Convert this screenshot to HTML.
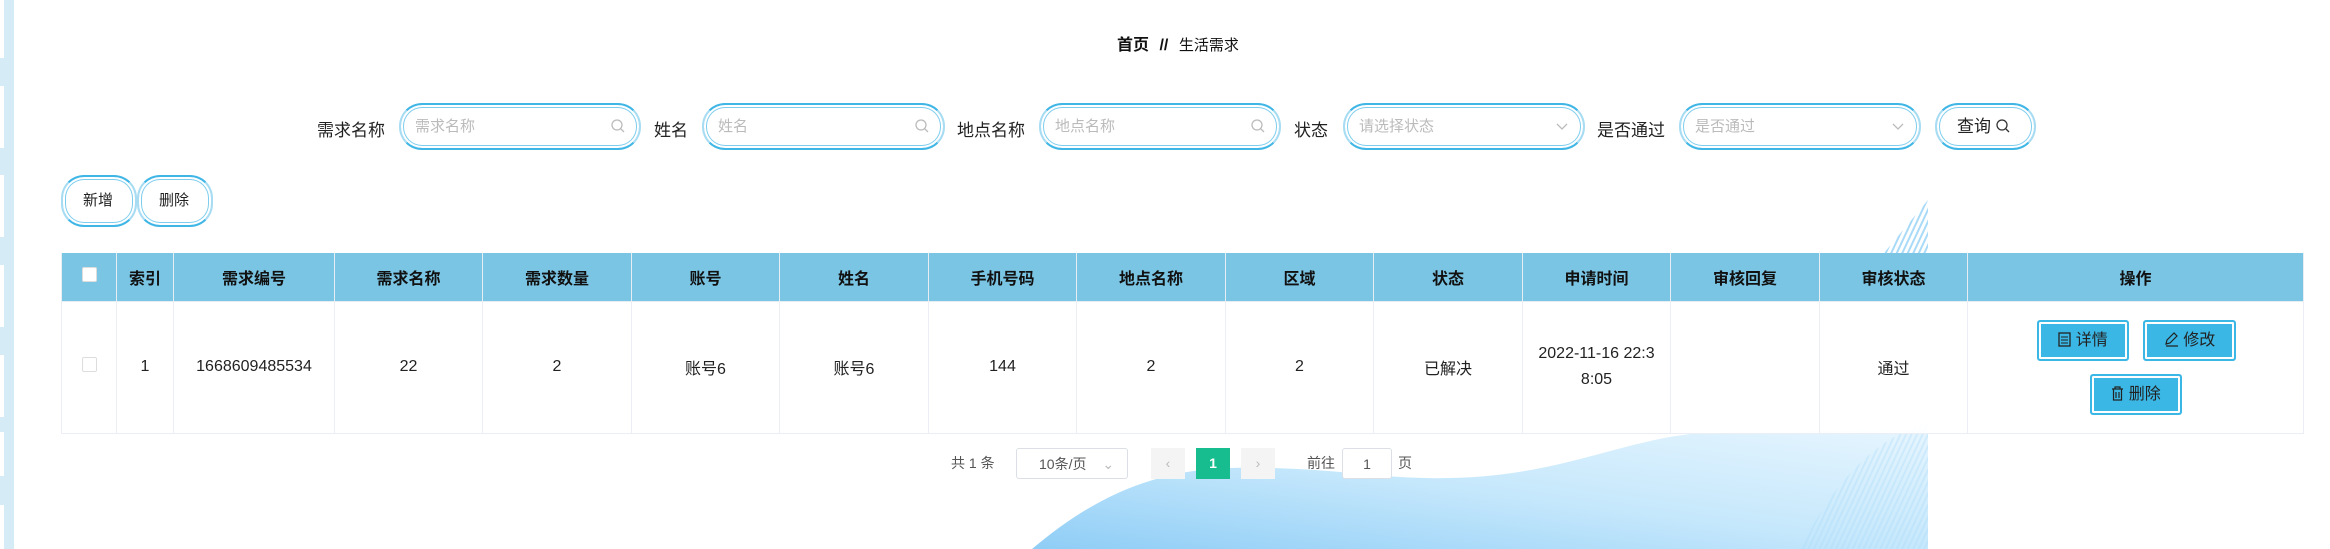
<!DOCTYPE html>
<html><head><meta charset="utf-8"><style>
*{box-sizing:border-box;margin:0;padding:0}
body{width:2330px;height:549px;overflow:hidden;background:#fff;position:relative;font-family:"Liberation Sans","Noto Sans CJK SC",sans-serif;color:#222}
.abs{position:absolute}
.strip{left:0;top:0;width:14px;height:549px;background:#d5ecf7}
.seg{position:absolute;left:0;width:4px;background:#fff}
.pill{position:absolute;height:47px;top:103px;border:2px solid #3fb6e6;border-left-color:#a8dcf3;border-right-color:#a8dcf3;border-radius:23px;box-shadow:inset 0 0 0 2px #fff,inset 0 0 0 3px #7fcdee;background:#fff;font-size:15px;color:#bbb;line-height:43px;padding-left:14px}
.lbl{position:absolute;top:116px;font-size:17px;color:#222}
.ico{position:absolute;right:14px;top:14px}
table{position:absolute;left:61px;top:253px;border-collapse:collapse;width:2243px;table-layout:fixed}
th{background:#7ac5e4;height:48px;font-size:16px;font-weight:bold;color:#111;border:1px solid #e6eef3;border-top:none}
td{height:132px;font-size:16px;text-align:center;border:1px solid #ebeef5;color:#222;background:rgba(255,255,255,0.9)}
.cb{display:inline-block;width:15px;height:15px;border:1px solid #ddd;border-radius:2px;background:#fff}
.ab{position:absolute;background:#3bb7e6;border:2px solid #3bb7e6;box-shadow:inset 0 0 0 2px #fff;border-radius:3px;font-size:16px;color:#222;text-align:center;line-height:37px;height:41px}
.pg{position:absolute;top:448px;height:31px;font-size:14px;color:#555;line-height:31px}
</style></head><body>
<svg class="abs" style="left:1030px;top:195px" width="900" height="354" viewBox="1030 195 900 354">
<defs><linearGradient id="g" x1="0" y1="1" x2="1" y2="0"><stop offset="0" stop-color="#8fcdf6"/><stop offset="0.5" stop-color="#c6e8fc"/><stop offset="1" stop-color="#e6f5fe"/></linearGradient>
<pattern id="h" width="5" height="5" patternUnits="userSpaceOnUse" patternTransform="rotate(25)"><rect width="2" height="5" fill="#a9daf8"/></pattern></defs>
<path d="M1032 549 C1090 500 1150 470 1230 468 C1330 466 1380 480 1450 478 C1560 476 1620 440 1700 433 L1928 430 L1928 549 Z" fill="url(#g)"/>
<path d="M1928 200 L1928 253 L1884 253 Z" fill="url(#h)"/>
<path d="M1800 549 C1840 470 1880 440 1928 420 L1928 549 Z" fill="url(#h)" opacity="0.35"/>
</svg>
<div class="abs strip"><div class="seg" style="top:0;height:58px"></div><div class="seg" style="top:86px;height:62px"></div><div class="seg" style="top:175px;height:62px"></div><div class="seg" style="top:265px;height:62px"></div><div class="seg" style="top:355px;height:62px"></div><div class="seg" style="top:432px;height:44px"></div><div class="seg" style="top:505px;height:44px"></div></div>
<div class="abs" style="left:1117px;top:31px;font-size:16px;color:#111"><b>首页</b> <b style="margin:0 6px">//</b> <span style="font-size:15px">生活需求</span></div>

<div class="lbl" style="left:317px">需求名称</div>
<div class="pill" style="left:399px;width:242px">需求名称<svg class="ico" width="14" height="14" viewBox="0 0 14 14"><circle cx="6" cy="6" r="5" fill="none" stroke="#bbb" stroke-width="1.3"/><path d="M10 10l3 3" stroke="#bbb" stroke-width="1.3"/></svg></div>
<div class="lbl" style="left:654px">姓名</div>
<div class="pill" style="left:702px;width:243px">姓名<svg class="ico" width="14" height="14" viewBox="0 0 14 14"><circle cx="6" cy="6" r="5" fill="none" stroke="#bbb" stroke-width="1.3"/><path d="M10 10l3 3" stroke="#bbb" stroke-width="1.3"/></svg></div>
<div class="lbl" style="left:957px">地点名称</div>
<div class="pill" style="left:1039px;width:242px">地点名称<svg class="ico" width="14" height="14" viewBox="0 0 14 14"><circle cx="6" cy="6" r="5" fill="none" stroke="#bbb" stroke-width="1.3"/><path d="M10 10l3 3" stroke="#bbb" stroke-width="1.3"/></svg></div>
<div class="lbl" style="left:1294px">状态</div>
<div class="pill" style="left:1343px;width:242px">请选择状态<svg class="ico" width="14" height="14" viewBox="0 0 14 14"><path d="M2 5l5 5 5-5" fill="none" stroke="#bbb" stroke-width="1.3"/></svg></div>
<div class="lbl" style="left:1597px">是否通过</div>
<div class="pill" style="left:1679px;width:242px">是否通过<svg class="ico" width="14" height="14" viewBox="0 0 14 14"><path d="M2 5l5 5 5-5" fill="none" stroke="#bbb" stroke-width="1.3"/></svg></div>
<div class="pill" style="left:1935px;width:101px;color:#222;font-size:17px;padding-left:20px">查询 <svg width="14" height="14" viewBox="0 0 14 14" style="vertical-align:-1px"><circle cx="6" cy="6" r="5" fill="none" stroke="#333" stroke-width="1.3"/><path d="M10 10l3 3" stroke="#333" stroke-width="1.3"/></svg></div>

<div class="pill" style="left:61px;top:175px;height:52px;width:76px;line-height:48px;color:#222;padding-left:20px;font-size:15px">新增</div>
<div class="pill" style="left:137px;top:175px;height:52px;width:76px;line-height:48px;color:#222;padding-left:20px;font-size:15px">删除</div>

<table>
<colgroup><col style="width:55px"><col style="width:57px"><col style="width:161px"><col style="width:148px"><col style="width:149px"><col style="width:148px"><col style="width:149px"><col style="width:148px"><col style="width:149px"><col style="width:148px"><col style="width:149px"><col style="width:148px"><col style="width:149px"><col style="width:148px"><col></colgroup>
<tr><th><span class="cb"></span></th><th>索引</th><th>需求编号</th><th>需求名称</th><th>需求数量</th><th>账号</th><th>姓名</th><th>手机号码</th><th>地点名称</th><th>区域</th><th>状态</th><th>申请时间</th><th>审核回复</th><th>审核状态</th><th>操作</th></tr>
<tr><td><span class="cb"></span></td><td>1</td><td>1668609485534</td><td>22</td><td>2</td><td>账号6</td><td>账号6</td><td>144</td><td>2</td><td>2</td><td>已解决</td><td style="line-height:26px;padding:0 12px">2022-11-16 22:3<br>8:05</td><td></td><td>通过</td><td></td></tr>
</table>
<div class="ab" style="left:2037px;top:320px;width:92px"><svg width="13" height="15" viewBox="0 0 13 15" style="vertical-align:-2px"><rect x="1" y="1" width="11" height="13" fill="none" stroke="#222" stroke-width="1.3"/><path d="M3 5h7M3 8h7M3 11h7" stroke="#222"/></svg> 详情</div>
<div class="ab" style="left:2143px;top:320px;width:93px"><svg width="15" height="15" viewBox="0 0 15 15" style="vertical-align:-2px"><path d="M2 12l1-4 7-7 3 3-7 7z M2 14h12" fill="none" stroke="#222" stroke-width="1.2"/></svg> 修改</div>
<div class="ab" style="left:2090px;top:374px;width:92px"><svg width="13" height="15" viewBox="0 0 13 15" style="vertical-align:-2px"><path d="M1 3h11M4 3V1h5v2M2.5 3v11h8V3M5 6v6M8 6v6" fill="none" stroke="#222" stroke-width="1.2"/></svg> 删除</div>

<div class="pg" style="left:951px">共 1 条</div>
<div class="pg" style="left:1016px;width:112px;border:1px solid #dcdfe6;border-radius:3px;background:#fff;padding-left:22px">10条/页 <span style="color:#bbb;margin-left:12px">&#8964;</span></div>
<div class="pg" style="left:1151px;width:34px;background:#f4f4f5;text-align:center;color:#bbb">&lsaquo;</div>
<div class="pg" style="left:1196px;width:34px;background:#17bd8e;text-align:center;color:#fff;font-weight:bold">1</div>
<div class="pg" style="left:1241px;width:34px;background:#f4f4f5;text-align:center;color:#bbb">&rsaquo;</div>
<div class="pg" style="left:1307px">前往</div>
<div class="pg" style="left:1342px;width:50px;border:1px solid #dcdfe6;border-radius:3px;background:#fff;text-align:center">1</div>
<div class="pg" style="left:1398px">页</div>
</body></html>
